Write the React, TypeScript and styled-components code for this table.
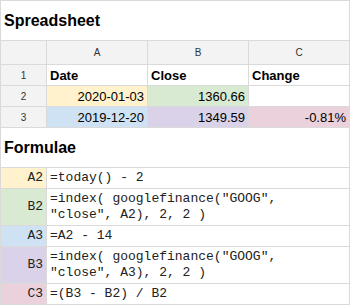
import React from 'react';
import styled, {createGlobalStyle} from 'styled-components';

const GRID_LINE = '#dadada';
const HEADER_BG = '#f3f3f3';

const YELLOW = '#fff2cc';
const GREEN = '#d9ead3';
const BLUE = '#cfe2f3';
const PURPLE = '#d9d2e9';
const PINK = '#ead1dc';

const GlobalStyle = createGlobalStyle`
	body {
		margin: 0;
		background: #ffffff;
		font-family: "Liberation Sans", Arial, sans-serif;
		color: #000000;
	}
`;

const Sheet = styled.div`
	width: 350px;
	box-sizing: border-box;
	border: 1px solid ${GRID_LINE};
	display: flex;
	flex-direction: column;
`;

const SectionTitle = styled.h2`
	margin: 0;
	height: 40px;
	box-sizing: border-box;
	padding-left: 3px;
	line-height: 39px;
	font-size: 16px;
	font-weight: bold;
	border-bottom: 1px solid ${GRID_LINE};
`;

const SheetGrid = styled.div`
	display: grid;
	grid-template-columns: 46px 101px 101px 1fr;
`;

type CellProps = {
	$fill?: string;
	$align?: 'left' | 'center' | 'right';
	$head?: boolean;
	$bold?: boolean;
	$lastCol?: boolean;
};

const Cell = styled.div<CellProps>`
	box-sizing: border-box;
	height: ${(p) => (p.$head ? '24px' : '21px')};
	padding: 0 3px;
	display: flex;
	align-items: center;
	justify-content: ${(p) => (p.$align === 'right' ? 'flex-end' : p.$align === 'center' ? 'center' : 'flex-start')};
	background: ${(p) => p.$fill ?? '#ffffff'};
	border-bottom: 1px solid ${GRID_LINE};
	border-right: ${(p) => (p.$lastCol ? 'none' : `1px solid ${GRID_LINE}`)};
	font-size: 13px;
	font-weight: ${(p) => (p.$bold ? 'bold' : 'normal')};
	white-space: nowrap;
	overflow: hidden;
`;

const HeaderCell = styled(Cell)`
	background: ${HEADER_BG};
	justify-content: center;
	font-size: 10px;
	color: #333333;
`;

const FormulaGrid = styled.div`
	display: grid;
	grid-template-columns: 46px 1fr;
`;

const KeyCell = styled.div<{$fill: string; $last?: boolean}>`
	box-sizing: border-box;
	padding: 2px 3px;
	display: flex;
	align-items: center;
	justify-content: flex-end;
	background: ${(p) => p.$fill};
	border-right: 1px solid ${GRID_LINE};
	border-bottom: ${(p) => (p.$last ? 'none' : `1px solid ${GRID_LINE}`)};
	font-family: "Liberation Mono", "Courier New", monospace;
	font-size: 13px;
	line-height: 16px;
	color: #222222;
`;

const FormulaCell = styled.div<{$last?: boolean}>`
	box-sizing: border-box;
	padding: 2px 3px;
	border-bottom: ${(p) => (p.$last ? 'none' : `1px solid ${GRID_LINE}`)};
	font-family: "Liberation Mono", "Courier New", monospace;
	font-size: 13px;
	line-height: 16px;
	white-space: pre;
	color: #222222;
`;

type DataRow = {
	label: string;
	cells: {text: string; fill?: string; align?: 'left' | 'right'; bold?: boolean}[];
};

const ROWS: DataRow[] = [
	{
		label: '1',
		cells: [
			{text: 'Date', bold: true},
			{text: 'Close', bold: true},
			{text: 'Change', bold: true},
		],
	},
	{
		label: '2',
		cells: [
			{text: '2020-01-03', fill: YELLOW, align: 'right'},
			{text: '1360.66', fill: GREEN, align: 'right'},
			{text: ''},
		],
	},
	{
		label: '3',
		cells: [
			{text: '2019-12-20', fill: BLUE, align: 'right'},
			{text: '1349.59', fill: PURPLE, align: 'right'},
			{text: '-0.81%', fill: PINK, align: 'right'},
		],
	},
];

const FORMULAE = [
	{key: 'A2', fill: YELLOW, text: '=today() - 2'},
	{key: 'B2', fill: GREEN, text: '=index( googlefinance("GOOG",\n"close", A2), 2, 2 )'},
	{key: 'A3', fill: BLUE, text: '=A2 - 14'},
	{key: 'B3', fill: PURPLE, text: '=index( googlefinance("GOOG",\n"close", A3), 2, 2 )'},
	{key: 'C3', fill: PINK, text: '=(B3 - B2) / B2'},
];

const Spreadsheet: React.FC = () => {
	return (
		<SheetGrid>
			<HeaderCell $head />
			<HeaderCell $head>A</HeaderCell>
			<HeaderCell $head>B</HeaderCell>
			<HeaderCell $head $lastCol>C</HeaderCell>
			{ROWS.map((row) => (
				<React.Fragment key={row.label}>
					<HeaderCell>{row.label}</HeaderCell>
					{row.cells.map((cell, index) => (
						<Cell
							key={index}
							$fill={cell.fill}
							$align={cell.align}
							$bold={cell.bold}
							$lastCol={index === row.cells.length - 1}
						>
							{cell.text}
						</Cell>
					))}
				</React.Fragment>
			))}
		</SheetGrid>
	);
};

const Formulae: React.FC = () => {
	return (
		<FormulaGrid>
			{FORMULAE.map((f, index) => {
				const last = index === FORMULAE.length - 1;
				return (
					<React.Fragment key={f.key}>
						<KeyCell $fill={f.fill} $last={last}>{f.key}</KeyCell>
						<FormulaCell $last={last}>{f.text}</FormulaCell>
					</React.Fragment>
				);
			})}
		</FormulaGrid>
	);
};

const App: React.FC = () => {
	return (
		<>
			<GlobalStyle />
			<Sheet>
				<SectionTitle>Spreadsheet</SectionTitle>
				<Spreadsheet />
				<SectionTitle>Formulae</SectionTitle>
				<Formulae />
			</Sheet>
		</>
	);
};

export default App;
